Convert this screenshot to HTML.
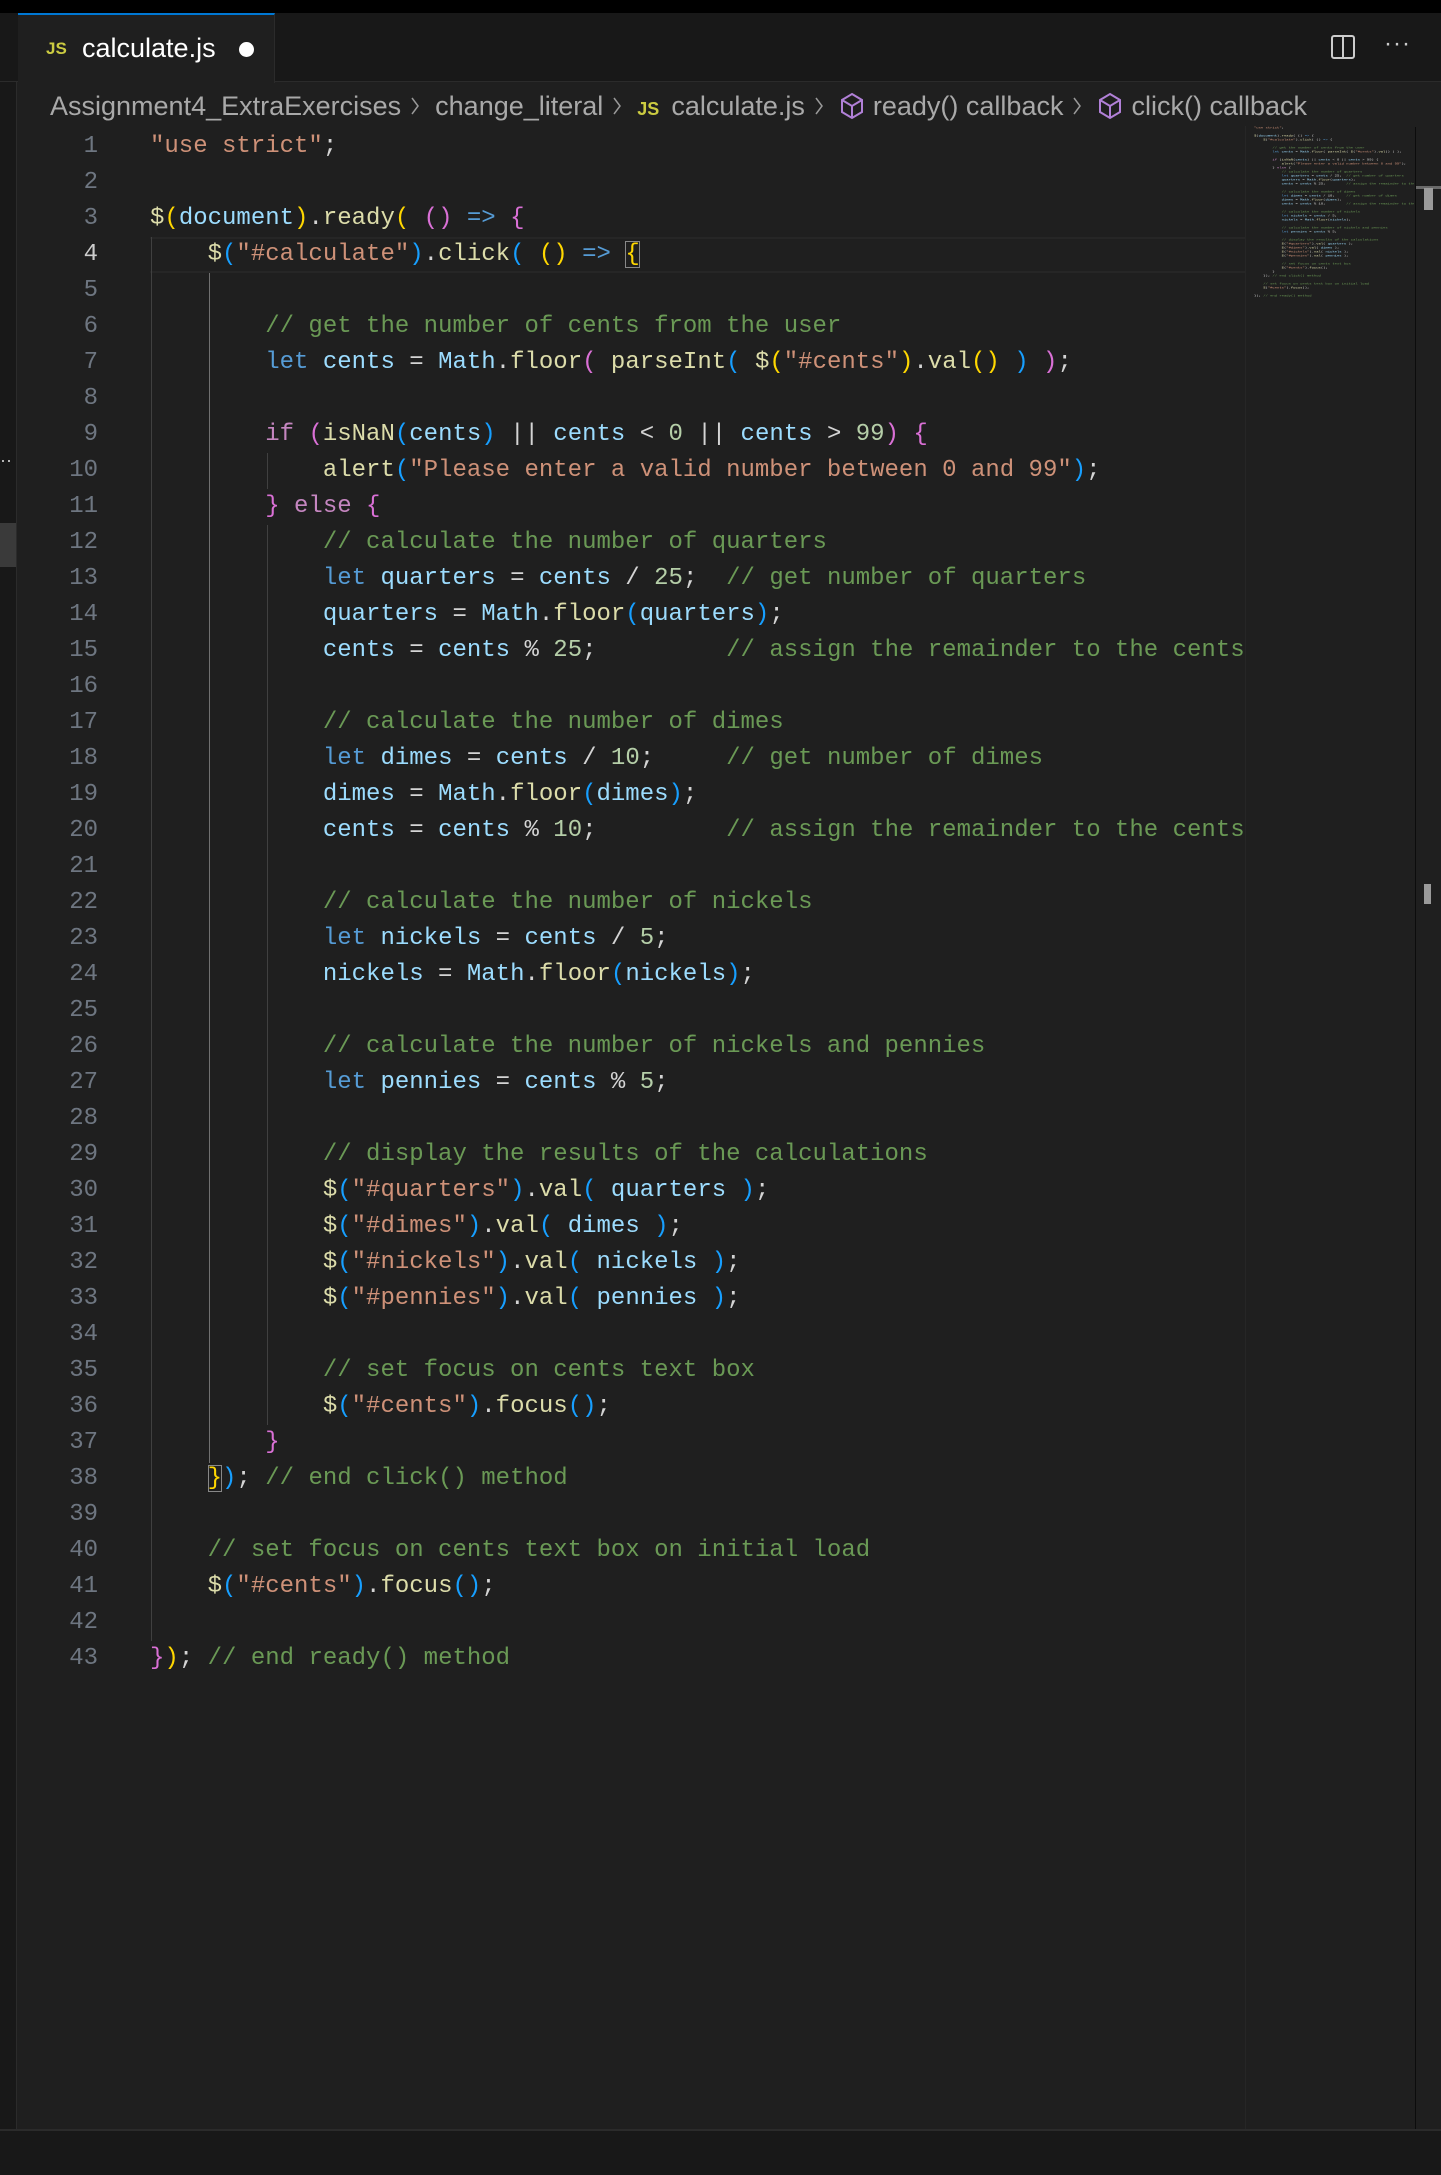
<!DOCTYPE html>
<html><head><meta charset="utf-8">
<style>
html,body{margin:0;padding:0;}
body{width:1441px;height:2173px;background:#1f1f1f;position:relative;overflow:hidden;font-family:"Liberation Sans",sans-serif;}
.abs{position:absolute;}
#topbar{left:0;top:0;width:1441px;height:13px;background:#000;}
#tabbar{left:0;top:13px;width:1441px;height:69px;background:#181818;border-bottom:1px solid #2b2b2b;box-sizing:border-box;}
#tab{left:18px;top:13px;width:257px;height:70px;background:#1f1f1f;border-top:2px solid #0078d4;box-sizing:border-box;border-right:1px solid #2b2b2b;}
#leftstrip{left:0;top:82px;width:16px;height:2047px;background:#181818;border-right:1px solid #2b2b2b;}
#bottom{left:0;top:2129px;width:1441px;height:44px;background:#181818;border-top:2px solid #2b2b2b;}
.code{left:150px;top:129px;width:1095px;height:1700px;overflow:hidden;}
pre{margin:0;font-family:"Liberation Mono",monospace;font-size:24px;line-height:36px;color:#d4d4d4;}
.ln{left:20px;top:129px;width:78px;text-align:right;color:#6e7681;}
.s{color:#ce9178}.k{color:#569cd6}.c{color:#c586c0}.f{color:#dcdcaa}.v{color:#9cdcfe}.n{color:#b5cea8}.m{color:#6a9955}
.g{color:#ffd700}.o{color:#da70d6}.b{color:#179fff}
.box{outline:1px solid #888;outline-offset:-1px;}
.guide{width:1px;background:#404040;}
#mini{left:1254px;top:126px;width:160px;height:180px;overflow:hidden;}
#mini pre{transform:scale(0.16,0.111);transform-origin:0 0;width:1000px;}
.chev{vertical-align:-3px;margin:0 14px 0 8px;}
.cube{vertical-align:-5px;margin-right:8px;}
</style></head><body>
<div id="topbar" class="abs"></div>
<div id="tabbar" class="abs"></div>
<div id="tab" class="abs">
  <span class="abs" style="left:28px;top:24px;color:#cbcb41;font-weight:bold;font-size:17px;">JS</span>
  <span class="abs" style="left:64px;top:18px;color:#fff;font-size:27px;">calculate.js</span>
  <span class="abs" style="left:221px;top:27px;width:15px;height:15px;border-radius:50%;background:#fff;"></span>
</div>
<svg class="abs" style="left:1330px;top:34px" width="26" height="26" viewBox="0 0 26 26"><rect x="2" y="2" width="22" height="22" rx="2" fill="none" stroke="#ccc" stroke-width="2"/><line x1="13" y1="2" x2="13" y2="24" stroke="#ccc" stroke-width="2"/></svg>
<span class="abs" style="left:1384px;top:30px;color:#ccc;font-size:24px;letter-spacing:1px;">···</span>
<div id="leftstrip" class="abs"></div>
<div class="abs" style="left:0;top:523px;width:16px;height:44px;background:#3a3a3a;"></div>
<span class="abs" style="left:0;top:450px;color:#ccc;font-size:18px;">··</span>
<!-- breadcrumb -->
<div class="abs" style="left:50px;top:91px;font-size:27px;color:#a9a9a9;white-space:nowrap;">
Assignment4_ExtraExercises<svg class="chev" width="12" height="24" viewBox="0 0 12 24"><path d="M3 4 L9 12 L3 20" fill="none" stroke="#999" stroke-width="1.5"/></svg>change_literal<svg class="chev" width="12" height="24" viewBox="0 0 12 24"><path d="M3 4 L9 12 L3 20" fill="none" stroke="#999" stroke-width="1.5"/></svg><span style="color:#cbcb41;font-weight:bold;font-size:18px;margin-right:12px;">JS</span>calculate.js<svg class="chev" width="12" height="24" viewBox="0 0 12 24"><path d="M3 4 L9 12 L3 20" fill="none" stroke="#999" stroke-width="1.5"/></svg><svg class="cube" width="26" height="28" viewBox="0 0 26 28"><path d="M13 2 L23 8 L23 20 L13 26 L3 20 L3 8 Z M3 8 L13 14 L23 8 M13 14 L13 26" fill="none" stroke="#b180d7" stroke-width="2"/></svg>ready() callback<svg class="chev" width="12" height="24" viewBox="0 0 12 24"><path d="M3 4 L9 12 L3 20" fill="none" stroke="#999" stroke-width="1.5"/></svg><svg class="cube" width="26" height="28" viewBox="0 0 26 28"><path d="M13 2 L23 8 L23 20 L13 26 L3 20 L3 8 Z M3 8 L13 14 L23 8 M13 14 L13 26" fill="none" stroke="#b180d7" stroke-width="2"/></svg>click() callback
</div>
<!-- current line -->
<div class="abs" style="left:150px;top:237px;width:1095px;height:36px;border-top:2px solid #262626;border-bottom:2px solid #262626;box-sizing:border-box;"></div>
<!-- guides -->
<div class="abs guide" style="left:151px;top:237px;height:1404px;"></div>
<div class="abs guide" style="left:209px;top:273px;height:1190px;background:#707070;"></div>
<div class="abs guide" style="left:267px;top:453px;height:36px;"></div>
<div class="abs guide" style="left:267px;top:525px;height:900px;"></div>
<pre class="abs ln">1
2
3
<span style="color:#ccc">4</span>
5
6
7
8
9
10
11
12
13
14
15
16
17
18
19
20
21
22
23
24
25
26
27
28
29
30
31
32
33
34
35
36
37
38
39
40
41
42
43</pre>
<div class="abs code"><pre id="src"><span class="s">"use strict"</span>;

<span class="f">$</span><span class="g">(</span><span class="v">document</span><span class="g">)</span>.<span class="f">ready</span><span class="g">(</span> <span class="o">()</span> <span class="k">=&gt;</span> <span class="o">{</span>
    <span class="f">$</span><span class="b">(</span><span class="s">"#calculate"</span><span class="b">)</span>.<span class="f">click</span><span class="b">(</span> <span class="g">()</span> <span class="k">=&gt;</span> <span class="g box">{</span>

        <span class="m">// get the number of cents from the user</span>
        <span class="k">let</span> <span class="v">cents</span> = <span class="v">Math</span>.<span class="f">floor</span><span class="o">(</span> <span class="f">parseInt</span><span class="b">(</span> <span class="f">$</span><span class="g">(</span><span class="s">"#cents"</span><span class="g">)</span>.<span class="f">val</span><span class="g">()</span> <span class="b">)</span> <span class="o">)</span>;

        <span class="c">if</span> <span class="o">(</span><span class="f">isNaN</span><span class="b">(</span><span class="v">cents</span><span class="b">)</span> || <span class="v">cents</span> &lt; <span class="n">0</span> || <span class="v">cents</span> &gt; <span class="n">99</span><span class="o">)</span> <span class="o">{</span>
            <span class="f">alert</span><span class="b">(</span><span class="s">"Please enter a valid number between 0 and 99"</span><span class="b">)</span>;
        <span class="o">}</span> <span class="c">else</span> <span class="o">{</span>
            <span class="m">// calculate the number of quarters</span>
            <span class="k">let</span> <span class="v">quarters</span> = <span class="v">cents</span> / <span class="n">25</span>;  <span class="m">// get number of quarters</span>
            <span class="v">quarters</span> = <span class="v">Math</span>.<span class="f">floor</span><span class="b">(</span><span class="v">quarters</span><span class="b">)</span>;
            <span class="v">cents</span> = <span class="v">cents</span> % <span class="n">25</span>;         <span class="m">// assign the remainder to the cents variable</span>

            <span class="m">// calculate the number of dimes</span>
            <span class="k">let</span> <span class="v">dimes</span> = <span class="v">cents</span> / <span class="n">10</span>;     <span class="m">// get number of dimes</span>
            <span class="v">dimes</span> = <span class="v">Math</span>.<span class="f">floor</span><span class="b">(</span><span class="v">dimes</span><span class="b">)</span>;
            <span class="v">cents</span> = <span class="v">cents</span> % <span class="n">10</span>;         <span class="m">// assign the remainder to the cents variable</span>

            <span class="m">// calculate the number of nickels</span>
            <span class="k">let</span> <span class="v">nickels</span> = <span class="v">cents</span> / <span class="n">5</span>;
            <span class="v">nickels</span> = <span class="v">Math</span>.<span class="f">floor</span><span class="b">(</span><span class="v">nickels</span><span class="b">)</span>;

            <span class="m">// calculate the number of nickels and pennies</span>
            <span class="k">let</span> <span class="v">pennies</span> = <span class="v">cents</span> % <span class="n">5</span>;

            <span class="m">// display the results of the calculations</span>
            <span class="f">$</span><span class="b">(</span><span class="s">"#quarters"</span><span class="b">)</span>.<span class="f">val</span><span class="b">(</span> <span class="v">quarters</span> <span class="b">)</span>;
            <span class="f">$</span><span class="b">(</span><span class="s">"#dimes"</span><span class="b">)</span>.<span class="f">val</span><span class="b">(</span> <span class="v">dimes</span> <span class="b">)</span>;
            <span class="f">$</span><span class="b">(</span><span class="s">"#nickels"</span><span class="b">)</span>.<span class="f">val</span><span class="b">(</span> <span class="v">nickels</span> <span class="b">)</span>;
            <span class="f">$</span><span class="b">(</span><span class="s">"#pennies"</span><span class="b">)</span>.<span class="f">val</span><span class="b">(</span> <span class="v">pennies</span> <span class="b">)</span>;

            <span class="m">// set focus on cents text box</span>
            <span class="f">$</span><span class="b">(</span><span class="s">"#cents"</span><span class="b">)</span>.<span class="f">focus</span><span class="b">()</span>;
        <span class="o">}</span>
    <span class="g box">}</span><span class="b">)</span>; <span class="m">// end click() method</span>

    <span class="m">// set focus on cents text box on initial load</span>
    <span class="f">$</span><span class="b">(</span><span class="s">"#cents"</span><span class="b">)</span>.<span class="f">focus</span><span class="b">()</span>;

<span class="o">}</span><span class="g">)</span>; <span class="m">// end ready() method</span></pre></div>
<!-- minimap -->
<div id="mini" class="abs"><pre><span class="s">"use strict"</span>;

<span class="f">$</span>(<span class="v">document</span>).<span class="f">ready</span>( () <span class="k">=&gt;</span> {
    <span class="f">$</span>(<span class="s">"#calculate"</span>).<span class="f">click</span>( () <span class="k">=&gt;</span> {

        <span class="m">// get the number of cents from the user</span>
        <span class="k">let</span> <span class="v">cents</span> = <span class="v">Math</span>.<span class="f">floor</span>( <span class="f">parseInt</span>( <span class="f">$</span>(<span class="s">"#cents"</span>).<span class="f">val</span>() ) );

        <span class="c">if</span> (<span class="f">isNaN</span>(<span class="v">cents</span>) || <span class="v">cents</span> &lt; 0 || <span class="v">cents</span> &gt; 99) {
            <span class="f">alert</span>(<span class="s">"Please enter a valid number between 0 and 99"</span>);
        } <span class="c">else</span> {
            <span class="m">// calculate the number of quarters</span>
            <span class="k">let</span> <span class="v">quarters</span> = <span class="v">cents</span> / 25;  <span class="m">// get number of quarters</span>
            <span class="v">quarters</span> = <span class="v">Math</span>.<span class="f">floor</span>(<span class="v">quarters</span>);
            <span class="v">cents</span> = <span class="v">cents</span> % 25;         <span class="m">// assign the remainder to the cents variable</span>

            <span class="m">// calculate the number of dimes</span>
            <span class="k">let</span> <span class="v">dimes</span> = <span class="v">cents</span> / 10;     <span class="m">// get number of dimes</span>
            <span class="v">dimes</span> = <span class="v">Math</span>.<span class="f">floor</span>(<span class="v">dimes</span>);
            <span class="v">cents</span> = <span class="v">cents</span> % 10;         <span class="m">// assign the remainder to the cents variable</span>

            <span class="m">// calculate the number of nickels</span>
            <span class="k">let</span> <span class="v">nickels</span> = <span class="v">cents</span> / 5;
            <span class="v">nickels</span> = <span class="v">Math</span>.<span class="f">floor</span>(<span class="v">nickels</span>);

            <span class="m">// calculate the number of nickels and pennies</span>
            <span class="k">let</span> <span class="v">pennies</span> = <span class="v">cents</span> % 5;

            <span class="m">// display the results of the calculations</span>
            <span class="f">$</span>(<span class="s">"#quarters"</span>).<span class="f">val</span>( <span class="v">quarters</span> );
            <span class="f">$</span>(<span class="s">"#dimes"</span>).<span class="f">val</span>( <span class="v">dimes</span> );
            <span class="f">$</span>(<span class="s">"#nickels"</span>).<span class="f">val</span>( <span class="v">nickels</span> );
            <span class="f">$</span>(<span class="s">"#pennies"</span>).<span class="f">val</span>( <span class="v">pennies</span> );

            <span class="m">// set focus on cents text box</span>
            <span class="f">$</span>(<span class="s">"#cents"</span>).<span class="f">focus</span>();
        }
    }); <span class="m">// end click() method</span>

    <span class="m">// set focus on cents text box on initial load</span>
    <span class="f">$</span>(<span class="s">"#cents"</span>).<span class="f">focus</span>();

}); <span class="m">// end ready() method</span></pre></div>
<div class="abs" style="left:1245px;top:126px;width:1px;height:2003px;background:#262626;"></div>
<div class="abs" style="left:1415px;top:127px;width:1px;height:2002px;background:#0c0c0c;"></div>
<div class="abs" style="left:1416px;top:186px;width:25px;height:3px;background:#6a6a6a;"></div>
<div class="abs" style="left:1424px;top:188px;width:9px;height:22px;background:#9a9a9a;"></div>
<div class="abs" style="left:1424px;top:884px;width:7px;height:20px;background:#9a9a9a;"></div>
<div id="bottom" class="abs"></div>
</body></html>
